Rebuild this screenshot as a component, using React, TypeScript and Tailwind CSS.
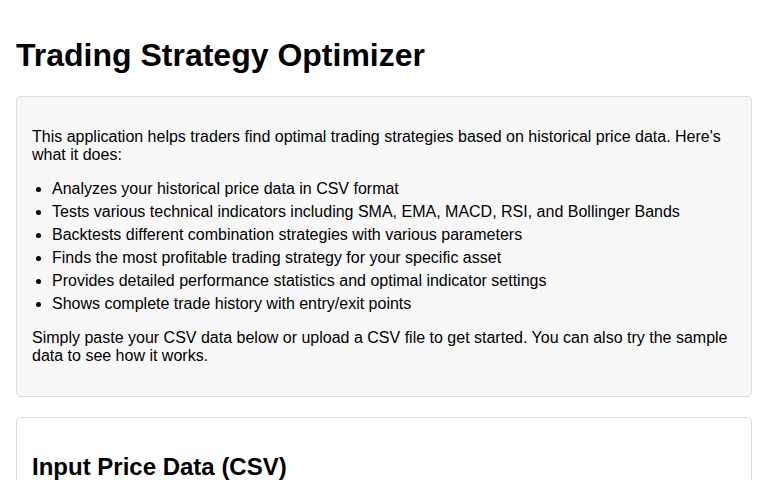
export default function App() {
  const features = [
    "Analyzes your historical price data in CSV format",
    "Tests various technical indicators including SMA, EMA, MACD, RSI, and Bollinger Bands",
    "Backtests different combination strategies with various parameters",
    "Finds the most profitable trading strategy for your specific asset",
    "Provides detailed performance statistics and optimal indicator settings",
    "Shows complete trade history with entry/exit points",
  ];

  return (
    <div className="min-h-screen bg-white p-4 font-['Liberation_Sans',Arial,sans-serif] text-[16px] leading-[18px] text-black">
      <h1 className="my-[21.44px] text-[32px] font-bold leading-[37px]">Trading Strategy Optimizer</h1>

      <div className="mb-5 rounded-[5px] border border-[#dddddd] bg-[#f8f8f8] p-[15px]">
        <p className="my-4">
          This application helps traders find optimal trading strategies based on historical price data. Here's
          what it does:
        </p>
        <ul className="my-4 list-disc pl-5">
          {features.map((f) => (
            <li key={f} className="mb-[5px]">
              {f}
            </li>
          ))}
        </ul>
        <p className="my-4">
          Simply paste your CSV data below or upload a CSV file to get started. You can also try the sample
          data to see how it works.
        </p>
      </div>

      <div className="mb-5 rounded-[5px] border border-[#dddddd] bg-white p-[15px]">
        <h2 className="my-[19.92px] text-[24px] font-bold leading-[28px]">Input Price Data (CSV)</h2>
        <textarea className="h-[200px] w-full border border-[#cccccc] p-2" />
      </div>
    </div>
  );
}
